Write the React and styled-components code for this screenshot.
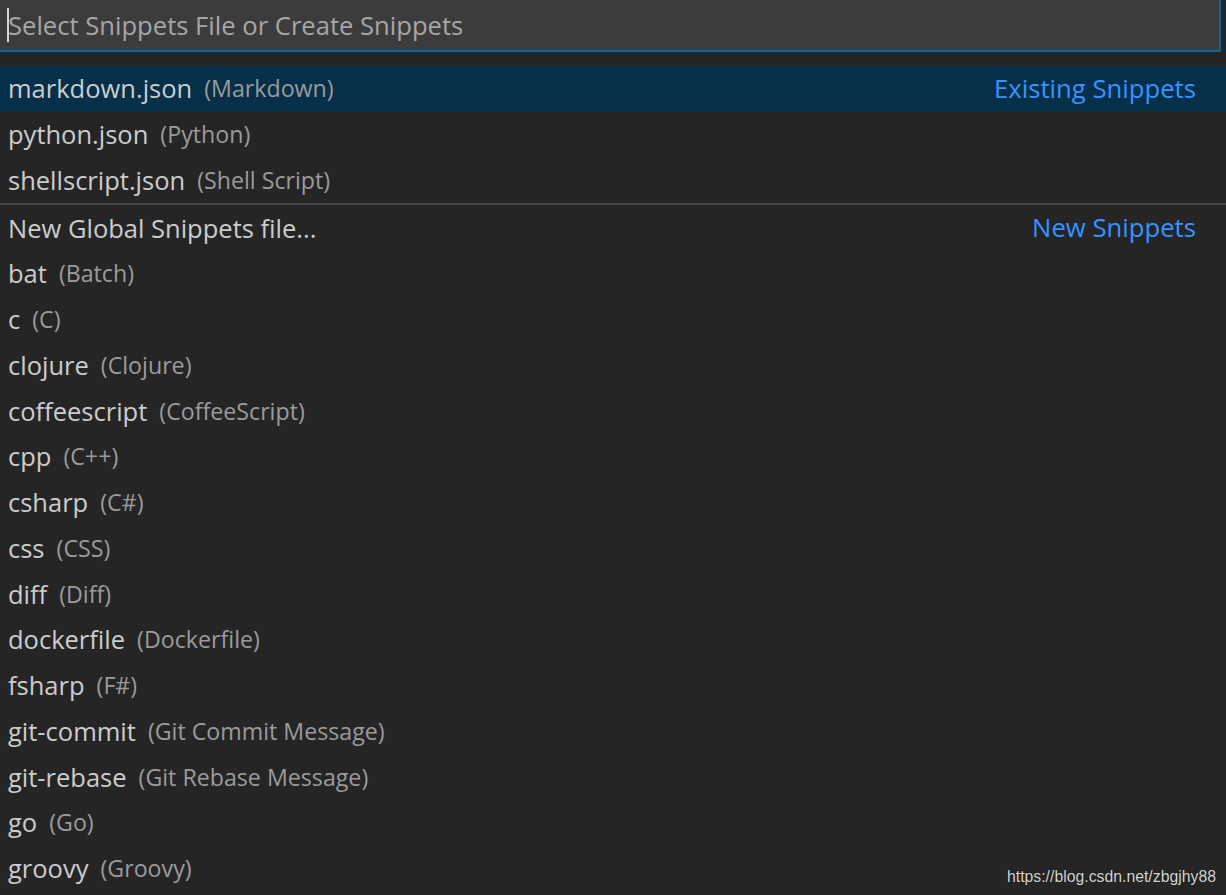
import React from 'react'
import styled, { createGlobalStyle } from 'styled-components'

const GlobalStyle = createGlobalStyle`
  html, body {
    margin: 0;
    padding: 0;
    background: #252526;
  }
  body {
    font-family: 'Open Sans', 'Noto Sans', sans-serif;
    overflow: hidden;
  }
`

const existing = [
  { label: 'markdown.json', desc: 'Markdown' },
  { label: 'python.json', desc: 'Python' },
  { label: 'shellscript.json', desc: 'Shell Script' }
]

const languages = [
  { label: 'bat', desc: 'Batch' },
  { label: 'c', desc: 'C' },
  { label: 'clojure', desc: 'Clojure' },
  { label: 'coffeescript', desc: 'CoffeeScript' },
  { label: 'cpp', desc: 'C++' },
  { label: 'csharp', desc: 'C#' },
  { label: 'css', desc: 'CSS' },
  { label: 'diff', desc: 'Diff' },
  { label: 'dockerfile', desc: 'Dockerfile' },
  { label: 'fsharp', desc: 'F#' },
  { label: 'git-commit', desc: 'Git Commit Message' },
  { label: 'git-rebase', desc: 'Git Rebase Message' },
  { label: 'go', desc: 'Go' },
  { label: 'groovy', desc: 'Groovy' }
]

const App = () => {
  return (
    <Widget>
      <GlobalStyle />
      <InputWrap>
        <InputBox>
          <Caret />
          <Placeholder>Select Snippets File or Create Snippets</Placeholder>
        </InputBox>
      </InputWrap>

      <List>
        {existing.map((item, i) => (
          <Row key={item.label} selected={i === 0}>
            <Label>{item.label}</Label>
            <Desc>({item.desc})</Desc>
            {i === 0 && <Group>Existing Snippets</Group>}
          </Row>
        ))}
        <Separator />
        <Row>
          <Label>New Global Snippets file...</Label>
          <Group>New Snippets</Group>
        </Row>
        {languages.map(item => (
          <Row key={item.label}>
            <Label>{item.label}</Label>
            <Desc>({item.desc})</Desc>
          </Row>
        ))}
      </List>

      <Watermark>https://blog.csdn.net/zbgjhy88</Watermark>
    </Widget>
  )
}

export default App

const Widget = styled.div`
  position: relative;
  width: 1226px;
  height: 895px;
  background: #252526;
  overflow: hidden;
`

const InputWrap = styled.div`
  padding: 0 5px 14px 0;
`

const InputBox = styled.div`
  display: flex;
  align-items: center;
  height: 50px;
  background: #3c3c3c;
  border-right: 2px solid #0e639c;
  border-bottom: 2px solid #0e639c;
  padding-left: 7px;
`

const Caret = styled.span`
  width: 2px;
  height: 34px;
  background: #d4d4d4;
  margin-right: -1px;
`

const Placeholder = styled.span`
  font-size: 25.6px;
  color: #a6a6a6;
  white-space: nowrap;
`

const List = styled.div`
  display: flex;
  flex-direction: column;
`

const Row = styled.div`
  display: flex;
  align-items: center;
  height: 45.75px;
  padding: 0 30px 1px 8px;
  box-sizing: border-box;
  background: ${props => (props.selected ? '#062f4a' : 'transparent')};
  white-space: nowrap;
`

const Label = styled.span`
  font-size: 25.5px;
  color: #cccccc;
`

const Desc = styled.span`
  font-size: 23.2px;
  color: #9b9b9b;
  margin-left: 12px;
`

const Group = styled.span`
  margin-left: auto;
  font-size: 25.7px;
  color: #3794ff;
`

const Separator = styled.div`
  height: 2px;
  background: #474747;
`

const Watermark = styled.div`
  position: absolute;
  right: 10px;
  bottom: 9px;
  font-family: 'Liberation Sans', Arial, sans-serif;
  font-size: 15.8px;
  color: #d6d6d6;
  text-shadow: 0 0 1px #000;
`
